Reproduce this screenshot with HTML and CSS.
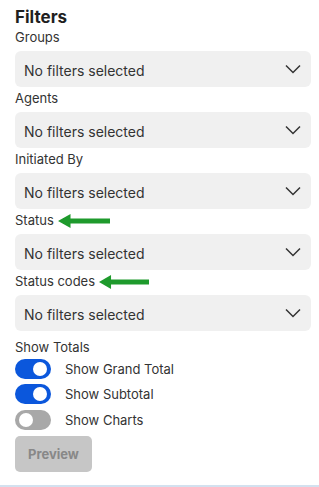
FILE: index.html
```html
<!DOCTYPE html>
<html lang="en">
<head>
  <meta charset="UTF-8">
  <meta name="viewport" content="width=device-width, initial-scale=1.0">
  <title>Filters</title>
  <link rel="stylesheet" href="styles.css">
</head>
<body>
  <div class="panel">
    <h2 class="title">Filters</h2>

    <div class="field">
      <label>Groups</label>
      <div class="select"><span>No filters selected</span><svg class="chev" viewBox="0 0 16 10" width="16" height="10"><path d="M1 1.5l7 7 7-7"/></svg></div>
    </div>
    <div class="field">
      <label>Agents</label>
      <div class="select"><span>No filters selected</span><svg class="chev" viewBox="0 0 16 10" width="16" height="10"><path d="M1 1.5l7 7 7-7"/></svg></div>
    </div>
    <div class="field">
      <label>Initiated By</label>
      <div class="select"><span>No filters selected</span><svg class="chev" viewBox="0 0 16 10" width="16" height="10"><path d="M1 1.5l7 7 7-7"/></svg></div>
    </div>
    <div class="field">
      <label>Status <svg class="arrow" viewBox="0 0 54 14" width="52" height="14" preserveAspectRatio="none"><path d="M0 7l13-7v4.5h41v5H13V14z"/></svg></label>
      <div class="select"><span>No filters selected</span><svg class="chev" viewBox="0 0 16 10" width="16" height="10"><path d="M1 1.5l7 7 7-7"/></svg></div>
    </div>
    <div class="field">
      <label>Status codes <svg class="arrow" viewBox="0 0 54 14" width="50" height="14" preserveAspectRatio="none"><path d="M0 7l13-7v4.5h41v5H13V14z"/></svg></label>
      <div class="select"><span>No filters selected</span><svg class="chev" viewBox="0 0 16 10" width="16" height="10"><path d="M1 1.5l7 7 7-7"/></svg></div>
    </div>

    <div class="totals">
      <div class="totals-label">Show Totals</div>
      <div class="toggle-row"><span class="toggle on"></span>Show Grand Total</div>
      <div class="toggle-row"><span class="toggle on"></span>Show Subtotal</div>
      <div class="toggle-row"><span class="toggle"></span>Show Charts</div>
    </div>

    <button class="preview" disabled>Preview</button>
  </div>
</body>
</html>
```

FILE: styles.css
```css
body {
  margin: 0;
  font-family: Inter, "Noto Sans", sans-serif;
  color: #333;
  background: #fff;
}
.panel {
  box-sizing: border-box;
  height: 487px;
  padding: 6px 8px 0 15px;
  border-bottom: 2px solid #d3e1ef;
}
.title {
  margin: 0;
  font-size: 17px;
  font-weight: 700;
  color: #1f1f1f;
  line-height: 22px;
}
.field label {
  display: flex;
  align-items: center;
  gap: 4px;
  font-size: 13px;
  line-height: 17px;
  padding: 1px 0 5px;
  color: #333;
}
.arrow path {
  fill: #1e9a2c;
}
.select {
  display: flex;
  align-items: center;
  justify-content: space-between;
  height: 36px;
  background: #f0f0f0;
  border-radius: 6px;
  padding: 0 10px 0 9px;
  margin-bottom: 2px;
  font-size: 14px;
  color: #333;
}
.select span {
  padding-top: 2px;
}
.chev path {
  fill: none;
  stroke: #333;
  stroke-width: 1.5;
}
.totals {
  margin-top: 8px;
  font-size: 13px;
}
.totals-label {
  line-height: 17px;
}
.toggle-row {
  display: flex;
  align-items: center;
  height: 25.5px;
}
.toggle {
  position: relative;
  width: 36px;
  height: 20px;
  border-radius: 10px;
  background: #a8a8a8;
  margin-right: 14px;
}
.toggle::after {
  content: "";
  position: absolute;
  top: 3px;
  left: 4px;
  width: 14px;
  height: 14px;
  border-radius: 50%;
  background: #fff;
}
.toggle.on {
  background: #0b57dc;
}
.toggle.on::after {
  left: 18px;
}
.preview {
  margin-top: 3px;
  width: 77px;
  height: 36px;
  border: none;
  border-radius: 5px;
  background: #c6c6c6;
  color: #888;
  font-family: inherit;
  font-size: 13px;
  font-weight: 700;
}
```
